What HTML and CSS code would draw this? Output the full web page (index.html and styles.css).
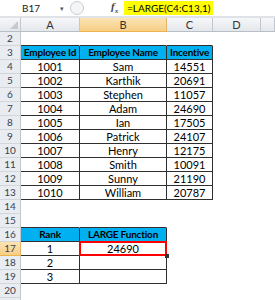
FILE: index.html
```html
<!DOCTYPE html>
<html lang="en">
<head>
    <meta charset="UTF-8">
    <meta name="viewport" content="width=device-width, initial-scale=1.0">
    <title>LARGE Function</title>
    <link rel="stylesheet" href="styles.css">
</head>
<body>
    <div class="formula-bar">
        <div class="name-box">B17</div>
        <div class="name-arrow">&#9662;</div>
        <div class="grip"></div>
        <div class="fx">f<sub>x</sub></div>
        <div class="formula">=LARGE(C4:C13,1)</div>
    </div>
    <div class="bar-gap"></div>

    <table class="sheet">
        <colgroup>
            <col class="w-rh"><col class="w-a"><col class="w-b"><col class="w-c"><col class="w-d"><col>
        </colgroup>
        <tr>
            <td class="ch corner"><span class="tri"></span></td>
            <td class="ch">A</td>
            <td class="ch active">B</td>
            <td class="ch">C</td>
            <td class="ch">D</td>
            <td class="ch"></td>
        </tr>
        <tr><td class="rh">2</td><td class="above"></td><td class="above"></td><td class="above"></td><td></td><td></td></tr>
        <tr>
            <td class="rh">3</td>
            <td class="hd">Employee Id</td>
            <td class="hd">Employee Name</td>
            <td class="hd">Incentive</td>
            <td></td><td></td>
        </tr>
        <tr><td class="rh">4</td><td class="dc">1001</td><td class="dc">Sam</td><td class="dc">14551</td><td></td><td></td></tr>
        <tr><td class="rh">5</td><td class="dc">1002</td><td class="dc">Karthik</td><td class="dc">20691</td><td></td><td></td></tr>
        <tr><td class="rh">6</td><td class="dc">1003</td><td class="dc">Stephen</td><td class="dc">11057</td><td></td><td></td></tr>
        <tr><td class="rh">7</td><td class="dc">1004</td><td class="dc">Adam</td><td class="dc">24690</td><td></td><td></td></tr>
        <tr><td class="rh">8</td><td class="dc">1005</td><td class="dc">Ian</td><td class="dc">17505</td><td></td><td></td></tr>
        <tr><td class="rh">9</td><td class="dc">1006</td><td class="dc">Patrick</td><td class="dc">24107</td><td></td><td></td></tr>
        <tr><td class="rh">10</td><td class="dc">1007</td><td class="dc">Henry</td><td class="dc">12175</td><td></td><td></td></tr>
        <tr><td class="rh">11</td><td class="dc">1008</td><td class="dc">Smith</td><td class="dc">10091</td><td></td><td></td></tr>
        <tr><td class="rh">12</td><td class="dc">1009</td><td class="dc">Sunny</td><td class="dc">21190</td><td></td><td></td></tr>
        <tr><td class="rh">13</td><td class="dc">1010</td><td class="dc">William</td><td class="dc">20787</td><td></td><td></td></tr>
        <tr><td class="rh">14</td><td></td><td></td><td></td><td></td><td></td></tr>
        <tr><td class="rh">15</td><td class="above"></td><td class="above"></td><td></td><td></td><td></td></tr>
        <tr>
            <td class="rh">16</td>
            <td class="hd">Rank</td>
            <td class="hd">LARGE Function</td>
            <td></td><td></td><td></td>
        </tr>
        <tr><td class="rh active">17</td><td class="dc">1</td><td class="dc selected">24690<span class="handle"></span></td><td></td><td></td><td></td></tr>
        <tr><td class="rh">18</td><td class="dc">2</td><td class="dc"></td><td></td><td></td><td></td></tr>
        <tr><td class="rh">19</td><td class="dc">3</td><td class="dc"></td><td></td><td></td><td></td></tr>
        <tr><td class="rh">20</td><td></td><td></td><td></td><td></td><td></td></tr>
        <tr><td class="rh"></td><td></td><td></td><td></td><td></td><td></td></tr>
    </table>
</body>
</html>
```

FILE: styles.css
```css
body {
    margin: 0;
    width: 275px;
    height: 300px;
    overflow: hidden;
    background-color: #fff;
    font-family: Lato, "Liberation Sans", sans-serif;
    font-size: 11px;
    color: #000;
}

/* Formula bar */
.formula-bar {
    display: flex;
    align-items: center;
    height: 16px;
    background-color: #fff;
}

.formula-bar > div {
    flex: none;
}

.name-box {
    width: 58px;
    padding-left: 2px;
    text-align: center;
    color: #222;
    font-size: 10px;
}

.name-arrow {
    width: 8px;
    font-size: 7px;
    color: #555;
}

.grip {
    width: 12px;
    height: 12px;
    margin-left: 2px;
    border: 1px solid #c8ccd2;
    border-radius: 50%;
    background-color: #f4f5f7;
}

.fx {
    margin-left: 27px;
    width: 13px;
    font-family: "Liberation Serif", serif;
    font-style: italic;
    font-weight: bold;
    font-size: 11px;
    color: #444;
}

.fx sub {
    font-size: 7px;
}

.formula {
    height: 14px;
    line-height: 14px;
    padding: 0 3px;
    background-color: #ffff00;
    font-size: 10px;
}

.bar-gap {
    height: 2px;
    background-color: #dfe3e8;
}

/* Grid */
.sheet {
    width: 275px;
    table-layout: fixed;
    border-collapse: separate;
    border-spacing: 0;
}

.w-rh { width: 21px; }
.w-a { width: 59px; }
.w-b { width: 87px; }
.w-c { width: 46px; }
.w-d { width: 48px; }

.sheet tr {
    height: 14px;
}

.sheet td {
    height: 13px;
    padding: 0;
    line-height: 13px;
    text-align: center;
    white-space: nowrap;
    overflow: hidden;
    border-right: 1px solid transparent;
    border-bottom: 1px solid transparent;
}

.sheet td.ch {
    background: linear-gradient(#f6f7f9, #e4e7eb);
    border-right-color: #c3c7cd;
    border-bottom-color: #b9bec5;
    color: #333;
    font-size: 11px;
}

.sheet td.corner {
    position: relative;
}

.tri {
    position: absolute;
    right: 2px;
    bottom: 2px;
    width: 0;
    height: 0;
    border-left: 8px solid transparent;
    border-bottom: 8px solid #c6cacf;
}

.sheet td.rh {
    background-color: #e9ecf0;
    border-right-color: #c3c7cd;
    border-bottom-color: #d2d6db;
    color: #3a4250;
    font-size: 10px;
}

.sheet td.active {
    background: linear-gradient(#fbe3b4, #f6cf86);
    border-bottom-color: #f0b24b;
    border-right-color: #e5b56a;
}

.sheet td.above {
    border-bottom-color: #2f2f2f;
}

.sheet td.hd {
    background-color: #00b0f0;
    font-weight: bold;
    font-size: 10px;
    letter-spacing: -0.2px;
    border-right-color: #2f2f2f;
    border-bottom-color: #2f2f2f;
}

.sheet td.dc {
    border-right-color: #2f2f2f;
    border-bottom-color: #2f2f2f;
}

.sheet td.selected {
    position: relative;
    overflow: visible;
}

.sheet td.selected::after {
    content: "";
    position: absolute;
    left: -1px;
    top: -1px;
    right: -1px;
    bottom: -1px;
    border: 2px solid #ff0000;
}

.handle {
    position: absolute;
    right: -3px;
    bottom: -3px;
    width: 4px;
    height: 4px;
    background-color: #333;
    z-index: 1;
}
```
